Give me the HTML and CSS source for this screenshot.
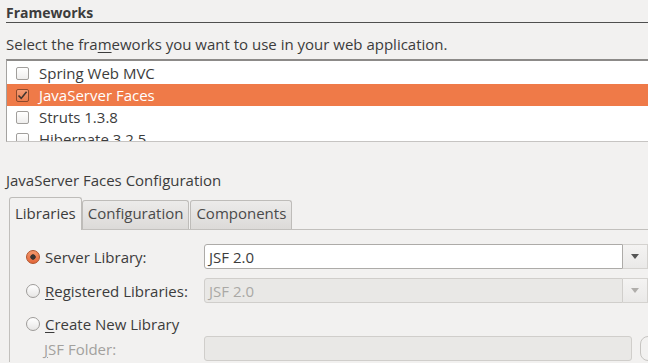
FILE: index.html
```html
<html>
<head>
<title>New Web Application - Frameworks</title>
<link rel="stylesheet" href="styles.css">
</head>
<body>
<div class="heading">Frameworks</div>
<div class="prompt">Select the fra<u>m</u>eworks you want to use in your web application.</div>

<div class="fw-list">
  <div class="fw-row"><span class="check"></span>Spring Web MVC</div>
  <div class="fw-row selected"><span class="check"><svg width="11" height="11" viewBox="0 0 11 11"><polyline points="1.5,5.5 4.2,8.4 9.6,1.8" fill="none" stroke="#3f3530" stroke-width="1.6"/></svg></span>JavaServer Faces</div>
  <div class="fw-row"><span class="check"></span>Struts 1.3.8</div>
  <div class="fw-row"><span class="check"></span>Hibernate 3.2.5</div>
</div>

<div class="config-title">JavaServer Faces Configuration</div>

<div class="tabs">
  <div class="tab active">Libraries</div>
  <div class="tab">Configuration</div>
  <div class="tab">Components</div>
</div>

<div class="panel">
  <div class="opt-row">
    <label class="opt-label"><span class="radio on"></span>Server Library:</label>
    <div class="combo">
      <div class="combo-field">JSF 2.0</div>
      <div class="combo-btn"><span class="arrow"></span></div>
    </div>
  </div>
  <div class="opt-row">
    <label class="opt-label"><span class="radio"></span><span><u>R</u>egistered Libraries:</span></label>
    <div class="combo disabled">
      <div class="combo-field">JSF 2.0</div>
      <div class="combo-btn"><span class="arrow"></span></div>
    </div>
  </div>
  <div class="opt-row create">
    <label class="opt-label"><span class="radio"></span><span><u>C</u>reate New Library</span></label>
  </div>
  <div class="opt-row folder">
    <label class="opt-label sub"><span><u>J</u>SF Folder:</span></label>
    <div class="textbox"></div>
    <div class="browse"></div>
  </div>
</div>
</body>
</html>
```

FILE: styles.css
```css
html, body {
    margin: 0;
    overflow: hidden;
}
body {
    width: 648px;
    height: 363px;
    background-color: #f2f1f0;
    color: #3c3c3c;
    font-family: "Open Sans", sans-serif;
    font-size: 15px;
    line-height: 18px;
}
u {
    text-decoration-thickness: 1px;
    text-underline-offset: 2px;
}
.heading {
    margin-left: 6px;
    padding-top: 4px;
    font-size: 14px;
    font-weight: bold;
    border-bottom: 1px solid #4f4f4f;
}
.prompt {
    margin: 12px 0 0 6px;
}

/* framework list */
.fw-list {
    margin: 6px -10px 0 6px;
    height: 79px;
    padding-top: 1px;
    overflow: hidden;
    background-color: #fff;
    border: 1px solid #a4a2a0;
    border-bottom-color: #c6c4c2;
    border-top: 2px solid #8c8a88;
}
.fw-row {
    display: flex;
    align-items: center;
    gap: 10px;
    height: 22px;
    padding-left: 9px;
    white-space: nowrap;
}
.fw-row.selected {
    background-color: #ef7a48;
    color: #fff;
}
.check {
    flex: none;
    display: flex;
    align-items: center;
    justify-content: center;
    box-sizing: border-box;
    width: 13px;
    height: 13px;
    border: 1px solid #a19f9c;
    border-radius: 2px;
    background: linear-gradient(#ffffff, #efeeed);
}
.fw-row.selected .check {
    border-color: #8e4a2c;
    background: linear-gradient(#f49c75, #ea7b4d);
}

/* tabs */
.config-title {
    margin: 29px 0 0 6px;
}
.tabs {
    display: flex;
    align-items: flex-end;
    height: 33px;
    margin: 8px 0 0 9px;
}
.tab {
    box-sizing: border-box;
    height: 29px;
    margin-bottom: 1px;
    padding: 3px 5px 0 5px;
    border: 1px solid #bebcb9;
    border-bottom: none;
    border-radius: 3px 3px 0 0;
    background: linear-gradient(#ecebea, #dcdad8);
    color: #4a4a4a;
}
.tab + .tab + .tab {
    margin-left: 1px;
}
.tab.active {
    position: relative;
    z-index: 1;
    height: 33px;
    margin-bottom: 0;
    padding-top: 6px;
    background: #f2f1f0;
    color: #3c3c3c;
}

/* options panel */
.panel {
    margin: -1px -10px 0 9px;
    height: 118px;
    padding: 14px 9px 0 16px;
    border: 1px solid #c2c0bd;
    border-bottom: none;
}
.opt-row {
    display: flex;
    align-items: center;
    height: 25px;
    margin-bottom: 9px;
}
.opt-row.create {
    height: 24px;
    margin-bottom: 0;
}
.opt-label {
    flex: none;
    display: flex;
    align-items: center;
    gap: 5px;
    width: 178px;
    white-space: nowrap;
}
.opt-label.sub {
    box-sizing: border-box;
    padding-left: 18px;
    color: #a3a19e;
}
.radio {
    flex: none;
    box-sizing: border-box;
    width: 14px;
    height: 14px;
    border: 1px solid #9e9c99;
    border-radius: 50%;
    background: linear-gradient(#ffffff, #e7e6e5);
}
.radio.on {
    border-color: #b0532a;
    background: radial-gradient(circle, #3a3330 0 2.4px, transparent 3px),
                linear-gradient(#f5976b, #e3673a);
}
.combo {
    flex: 1;
    display: flex;
    height: 25px;
}
.combo-field {
    flex: 1;
    box-sizing: border-box;
    padding: 1px 0 0 4px;
    line-height: 22px;
    background-color: #fff;
    border: 1px solid #adaba8;
    border-radius: 3px 0 0 3px;
}
.combo-btn {
    flex: none;
    display: flex;
    align-items: center;
    justify-content: center;
    box-sizing: border-box;
    width: 25px;
    border: 1px solid #d4d2cf;
    border-left: none;
    background: linear-gradient(#f4f3f2, #eae9e8);
}
.arrow {
    width: 0;
    height: 0;
    border-left: 4px solid transparent;
    border-right: 4px solid transparent;
    border-top: 5px solid #555;
}
.combo.disabled .combo-field {
    background-color: #e9e8e6;
    border-color: #d0cecb;
    color: #aaa8a5;
}
.combo.disabled .arrow {
    border-top-color: #b0aeab;
}
.textbox {
    flex: 1;
    box-sizing: border-box;
    height: 25px;
    background-color: #e9e8e6;
    border: 1px solid #d0cecb;
    border-radius: 3px;
}
.browse {
    flex: none;
    box-sizing: border-box;
    width: 30px;
    height: 25px;
    margin: 0 -22px 0 8px;
    border: 1px solid #c6c4c1;
    border-radius: 8px;
}
```
